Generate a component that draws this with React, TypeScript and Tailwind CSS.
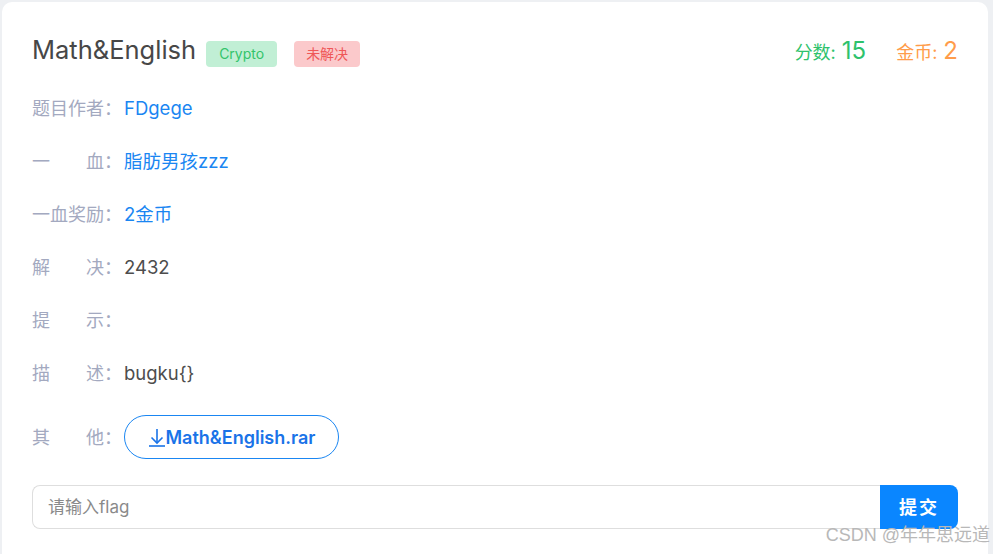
import { useState } from 'react'

type Row = {
  label: string
  value?: string
  tone?: 'link' | 'plain'
}

const rows: Row[] = [
  { label: '题目作者', value: 'FDgege', tone: 'link' },
  { label: '一血', value: '脂肪男孩zzz', tone: 'link' },
  { label: '一血奖励', value: '2金币', tone: 'link' },
  { label: '解决', value: '2432', tone: 'plain' },
  { label: '提示' },
  { label: '描述', value: 'bugku{}', tone: 'plain' },
]

function Label({ text }: { text: string }) {
  return (
    <span className="flex w-[92px] shrink-0 items-center text-[18px] text-[#a3a9c0]">
      <span className="inline-block w-[72px] [text-align-last:justify]">{text}</span>
      <span>：</span>
    </span>
  )
}

function DownloadIcon() {
  return (
    <svg width="18" height="20" viewBox="0 0 18 20" fill="none" stroke="currentColor" strokeWidth="1.6">
      <path d="M9 2v14" />
      <path d="M3.5 10.5 9 16l5.5-5.5" />
      <path d="M1 19h16" />
    </svg>
  )
}

export default function App() {
  const [flag, setFlag] = useState('')

  return (
    <div
      className="relative h-[554px] w-[993px] overflow-hidden bg-[#eef0f3] pl-[2px] pr-[5px] pt-[2px]"
      style={{ fontFamily: 'Inter, "Noto Sans CJK SC", sans-serif' }}
    >
      <div className="h-[600px] rounded-[10px] bg-white px-[30px] pt-[30px]">
        {/* Title row */}
        <div className="flex h-[36px] items-center justify-between">
          <div className="flex items-center">
            <h1 className="text-[25.5px] font-normal text-[#474747]">Math&amp;English</h1>
            <span className="ml-[10px] mt-[7px] flex h-[26px] items-center rounded-[4px] bg-[#c1efd5] px-[13px] text-[14px] text-[#33c46b]">
              Crypto
            </span>
            <span className="ml-[17px] mt-[7px] flex h-[26px] items-center rounded-[4px] bg-[#fbc9cb] px-[12px] text-[14px] text-[#ef5757]">
              未解决
            </span>
          </div>
          <div className="flex items-center gap-[30px] pt-[2px]">
            <span className="flex items-baseline text-[#2ec26c]">
              <span className="text-[18px]">分数:</span>
              <span className="ml-[6px] text-[24px]">15</span>
            </span>
            <span className="flex items-baseline text-[#ff9c4a]">
              <span className="text-[18px]">金币:</span>
              <span className="ml-[6px] text-[24px]">2</span>
            </span>
          </div>
        </div>

        {/* Info rows */}
        <div className="mt-[14px] flex flex-col">
          {rows.map((row) => (
            <div key={row.label} className="flex h-[53px] items-center">
              <Label text={row.label} />
              {row.value ? (
                <span
                  className={
                    row.tone === 'link'
                      ? 'text-[18.5px] text-[#1a86f2]'
                      : 'text-[18.5px] text-[#4d4d4d]'
                  }
                >
                  {row.value}
                </span>
              ) : null}
            </div>
          ))}
          <div className="flex items-center py-[15px]">
            <Label text="其他" />
            <button className="flex h-[44px] w-[215px] items-center justify-center rounded-full border border-[#1a86f2] text-[18px] font-semibold text-[#1a73e8]">
              <DownloadIcon />
              <span>Math&amp;English.rar</span>
            </button>
          </div>
        </div>

        {/* Flag input */}
        <div className="mt-[11px] flex h-[44px]">
          <input
            value={flag}
            onChange={(e) => setFlag(e.target.value)}
            placeholder="请输入flag"
            className="h-full flex-1 rounded-l-[8px] border border-r-0 border-[#dedede] px-[15px] text-[17px] text-[#333] outline-none placeholder:text-[#8a8a8a]"
          />
          <button className="h-full w-[78px] rounded-r-[8px] bg-[#0a86ff] text-[18px] font-bold tracking-[2px] text-white">
            提交
          </button>
        </div>
      </div>

      {/* watermark */}
      <span
        className="absolute bottom-[5px] right-[3px] text-[18px] text-[#b8b8b8]"
        style={{ fontFamily: '"Liberation Sans", "Noto Sans CJK SC", sans-serif' }}
      >
        CSDN @年年思远道
      </span>
    </div>
  )
}
